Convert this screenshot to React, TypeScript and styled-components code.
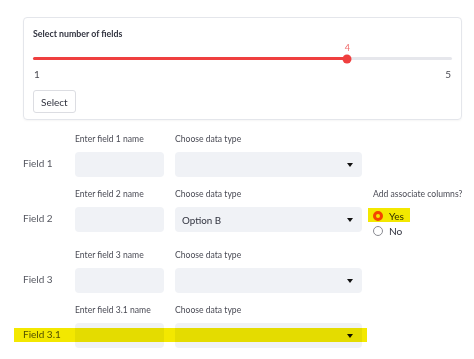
import React from "react";
import styled, { createGlobalStyle } from "styled-components";

const GlobalStyle = createGlobalStyle`
  html, body { margin: 0; padding: 0; background: #ffffff; }
  body { font-family: Lato, "Source Sans Pro", "Noto Sans", sans-serif; color: #31333f; }
  * { box-sizing: border-box; }
`;

const Page = styled.div`
  width: 474px;
  height: 359px;
  padding: 17px 12px 0 23px;
  overflow: hidden;
`;

const Card = styled.div`
  width: 439px;
  border: 1px solid #e4e6eb;
  border-radius: 4px;
  padding: 9px 9px 6px 9px;
  box-shadow: 0 1px 2px rgba(0, 0, 0, 0.04);
`;

const Title = styled.div`
  font-size: 8.8px;
  font-weight: 700;
  line-height: 14px;
  color: #31333f;
`;

const SliderArea = styled.div`
  position: relative;
  margin-top: 2px;
  padding-top: 14px;
`;

const Track = styled.div`
  position: relative;
  height: 3px;
  border-radius: 2px;
  background: #e6e7ec;
`;

const Fill = styled.div`
  height: 100%;
  border-radius: 2px;
  background: #ef3f3f;
`;

const Thumb = styled.div`
  position: absolute;
  top: 50%;
  width: 9px;
  height: 9px;
  border-radius: 50%;
  background: #ef3f3f;
  transform: translate(-50%, -50%);
`;

const ThumbValue = styled.div`
  position: absolute;
  top: 0;
  font-size: 9px;
  line-height: 10px;
  color: #f06a6a;
  transform: translateX(-50%);
`;

const Ticks = styled.div`
  display: flex;
  justify-content: space-between;
  margin-top: 8px;
  padding: 0 1px 0 1px;
  font-size: 10px;
  line-height: 12px;
  color: #4a4a52;
`;

const Button = styled.button`
  margin-top: 10px;
  height: 23px;
  padding: 0 7px;
  border: 1px solid #dcdde2;
  border-radius: 3px;
  background: #ffffff;
  font-family: inherit;
  font-size: 10px;
  color: #31333f;
`;

const Form = styled.div`
  display: flex;
  flex-direction: column;
  gap: 11px;
  margin-top: 13px;
`;

const Row = styled.div`
  position: relative;
  display: grid;
  grid-template-columns: 41px 89px 187px 1fr;
  grid-template-rows: 13px auto;
  column-gap: 11px;
  row-gap: 6px;
  align-items: start;
`;

const Label = styled.div<{ $col: number }>`
  grid-row: 1;
  grid-column: ${(p) => p.$col};
  font-size: 8.6px;
  line-height: 13px;
  color: #4a4b55;
  white-space: nowrap;
`;

const FieldName = styled.div`
  grid-row: 2;
  grid-column: 1;
  height: 25px;
  display: flex;
  align-items: center;
  padding-bottom: 3px;
  font-size: 10px;
  color: #555760;
  white-space: nowrap;
`;

const TextBox = styled.div`
  grid-row: 2;
  grid-column: 2;
  height: 25px;
  border-radius: 4px;
  background: #f0f2f6;
`;

const SelectBox = styled.div`
  grid-row: 2;
  grid-column: 3;
  height: 25px;
  border-radius: 4px;
  background: #f0f2f6;
  display: flex;
  align-items: center;
  justify-content: space-between;
  padding: 0 9px 0 7px;
  font-size: 9.8px;
  color: #31333f;
`;

const Caret = styled.span`
  width: 0;
  height: 0;
  border-left: 3.5px solid transparent;
  border-right: 3.5px solid transparent;
  border-top: 4px solid #111111;
  margin-top: 1px;
`;

const RadioGroup = styled.div`
  grid-row: 2;
  grid-column: 4;
  padding-top: 1px;
  display: flex;
  flex-direction: column;
`;

const RadioItem = styled.div`
  position: relative;
  height: 15px;
  display: flex;
  align-items: center;
  gap: 6px;
  font-size: 10.2px;
  color: #31333f;
`;

const RadioDot = styled.span<{ $checked?: boolean }>`
  width: 10px;
  height: 10px;
  border-radius: 50%;
  box-sizing: border-box;
  background: #ffffff;
  border: ${(p) => (p.$checked ? "3px solid #ff4b4b" : "1px solid #8a8b92")};
`;

const Highlight = styled.div`
  position: absolute;
  background: #f3e800;
  mix-blend-mode: multiply;
  pointer-events: none;
`;

type FieldRow = {
  n: string;
  option?: string;
  radios?: boolean;
  highlight?: boolean;
};

const rows: FieldRow[] = [
  { n: "1" },
  { n: "2", option: "Option B", radios: true },
  { n: "3" },
  { n: "3.1", highlight: true },
];

export default function App() {
  const min = 1;
  const max = 5;
  const value = 4;
  const pct = ((value - min) / (max - min)) * 100;

  return (
    <>
      <GlobalStyle />
      <Page>
        <Card>
          <Title>Select number of fields</Title>
          <SliderArea>
            <ThumbValue style={{ left: `${pct}%` }}>{value}</ThumbValue>
            <Track>
              <Fill style={{ width: `${pct}%` }} />
              <Thumb style={{ left: `${pct}%` }} />
            </Track>
          </SliderArea>
          <Ticks>
            <span>{min}</span>
            <span>{max}</span>
          </Ticks>
          <Button>Select</Button>
        </Card>

        <Form>
          {rows.map((r) => (
            <Row key={r.n}>
              <Label $col={2}>Enter field {r.n} name</Label>
              <Label $col={3}>Choose data type</Label>
              {r.radios && <Label $col={4}>Add associate columns?</Label>}
              <FieldName>Field {r.n}</FieldName>
              <TextBox />
              <SelectBox>
                <span>{r.option ?? ""}</span>
                <Caret />
              </SelectBox>
              {r.radios && (
                <RadioGroup>
                  <RadioItem>
                    <RadioDot $checked />
                    <span>Yes</span>
                    <Highlight style={{ left: -5, top: 0, width: 42, height: 14 }} />
                  </RadioItem>
                  <RadioItem>
                    <RadioDot />
                    <span>No</span>
                  </RadioItem>
                </RadioGroup>
              )}
              {r.highlight && (
                <Highlight style={{ left: -9, top: 24, width: 353, height: 14 }} />
              )}
            </Row>
          ))}
        </Form>
      </Page>
    </>
  );
}
